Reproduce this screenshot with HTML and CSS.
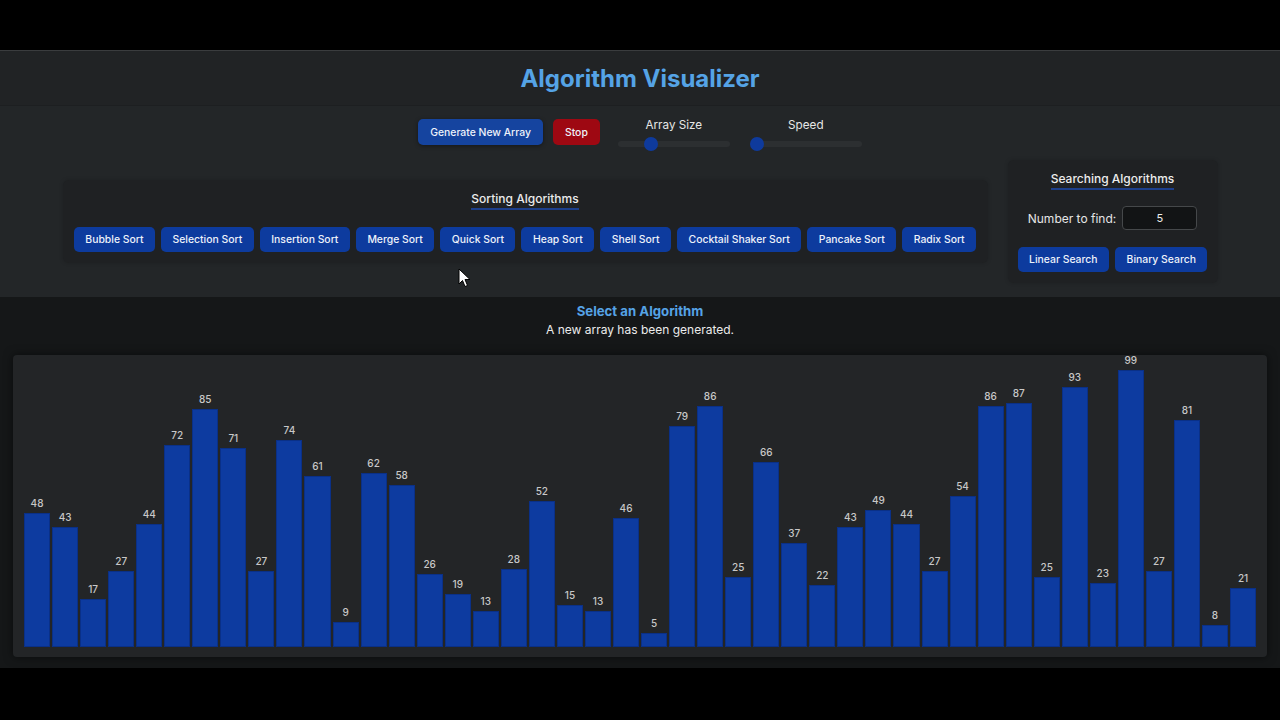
FILE: index.html
```html
<!DOCTYPE html>
<html lang="en">
<head>
<meta charset="utf-8">
<title>Algorithm Visualizer</title>
<link rel="stylesheet" href="styles.css">
</head>
<body>
<div class="frame">
  <header class="app-header">
    <h1 class="title">Algorithm Visualizer</h1>
  </header>
  <section class="controls">
    <div class="control-row">
      <button class="btn btn-generate">Generate New Array</button>
      <button class="btn btn-stop">Stop</button>
      <div class="slider-group">
        <label class="slider-label">Array Size</label>
        <input class="slider" type="range" min="5" max="150" value="44">
      </div>
      <div class="slider-group speed">
        <label class="slider-label">Speed</label>
        <input class="slider" type="range" min="1" max="100" value="1">
      </div>
    </div>
    <div class="panel-row">
      <div class="panel sort-panel">
        <h3 class="panel-title">Sorting Algorithms</h3>
        <div class="btn-row">
          <button class="btn">Bubble Sort</button>
          <button class="btn">Selection Sort</button>
          <button class="btn">Insertion Sort</button>
          <button class="btn">Merge Sort</button>
          <button class="btn">Quick Sort</button>
          <button class="btn">Heap Sort</button>
          <button class="btn">Shell Sort</button>
          <button class="btn">Cocktail Shaker Sort</button>
          <button class="btn">Pancake Sort</button>
          <button class="btn">Radix Sort</button>
        </div>
      </div>
      <div class="panel search-panel">
        <h3 class="panel-title">Searching Algorithms</h3>
        <div class="find-row">
          <span class="find-label">Number to find:</span>
          <input class="find-input" type="text" value="5">
        </div>
        <div class="btn-row">
          <button class="btn">Linear Search</button>
          <button class="btn">Binary Search</button>
        </div>
      </div>
    </div>
  </section>
  <section class="stage">
    <div class="status">
      <div class="status-title">Select an Algorithm</div>
      <div class="status-text">A new array has been generated.</div>
    </div>
    <div class="visualizer" id="viz"></div>
  </section>
</div>
<svg class="cursor" width="14" height="20" viewBox="0 0 14 20"><path d="M1 1 L1 16 L4.5 12.5 L7 18.5 L9.5 17.5 L7 11.5 L12 11.5 Z" fill="#fff" stroke="#000" stroke-width="1"/></svg>
<script>
const values=[48,43,17,27,44,72,85,71,27,74,61,9,62,58,26,19,13,28,52,15,13,46,5,79,86,25,66,37,22,43,49,44,27,54,86,87,25,93,23,99,27,81,8,21];
const viz=document.getElementById('viz');
values.forEach(v=>{
  const col=document.createElement('div');col.className='bar-col';
  const lab=document.createElement('span');lab.className='bar-label';lab.textContent=v;
  const bar=document.createElement('div');bar.className='bar';bar.style.height=(v*2.8)+'px';
  col.appendChild(lab);col.appendChild(bar);viz.appendChild(col);
});
</script>
</body>
</html>
```
FILE: styles.css
```css
* { box-sizing: border-box; }
html, body { margin: 0; padding: 0; }
body {
  background: #000;
  font-family: Inter, "Noto Sans", "Liberation Sans", sans-serif;
  color: #e8e8e8;
  width: 1280px;
  height: 720px;
  overflow: hidden;
  position: relative;
}
.frame {
  margin-top: 50px;
  border-top: 1px solid #3a3c3e;
  height: 618px;
  display: flex;
  flex-direction: column;
}
.app-header {
  height: 55px;
  background: #212325;
  border-bottom: 1px solid #1d1f21;
  display: flex;
  align-items: center;
  justify-content: center;
}
.title {
  margin: 0;
  font-size: 24px;
  font-weight: 700;
  color: #55a3e6;
  letter-spacing: 0;
}
.controls {
  height: 191px;
  background: #232628;
  padding-top: 10px;
}
.control-row {
  display: flex;
  justify-content: center;
  align-items: center;
  gap: 10px;
  height: 35px;
}
.btn {
  font-family: inherit;
  font-size: 10.4px;
  font-weight: 500;
  color: #eef2fa;
  background: #0d3b9e;
  border: none;
  border-radius: 5px;
  height: 25px;
  padding: 0 11.5px;
  white-space: nowrap;
  cursor: pointer;
}
.btn-generate {
  height: 26px;
  padding: 0 12px;
  margin-bottom: 3px;
  background: #15449f;
  box-shadow: 0 1px 4px rgba(0,0,0,0.4);
}
.btn-stop {
  height: 26px;
  padding: 0 12px;
  margin-bottom: 3px;
  background: #9e0812;
}
.slider-group {
  width: 112px;
  margin-left: 8px;
  display: flex;
  flex-direction: column;
  align-items: center;
  gap: 4px;
}
.slider-group.speed { margin-left: 10px; }
.slider-label {
  font-size: 11.7px;
  line-height: 16px;
  color: #e6e6e6;
}
.slider {
  -webkit-appearance: none;
  appearance: none;
  width: 112px;
  height: 14px;
  margin: 0;
  background: transparent;
}
.slider::-webkit-slider-runnable-track {
  height: 6px;
  background: #2c2f31;
  border-radius: 3px;
}
.slider::-webkit-slider-thumb {
  -webkit-appearance: none;
  width: 14px;
  height: 14px;
  border-radius: 50%;
  background: #0e3a9c;
  margin-top: -4px;
  border: none;
}
.panel-row {
  margin-top: 9px;
  display: flex;
  justify-content: center;
  align-items: center;
  gap: 20px;
}
.panel {
  background: #1f2123;
  border-radius: 6px;
  box-shadow: 0 0 4px rgba(0,0,0,0.18);
  display: flex;
  flex-direction: column;
  align-items: center;
}
.sort-panel {
  width: 925px;
  padding: 11px 12px 11px;
}
.sort-panel .btn-row { margin-top: 17px; }
.search-panel {
  width: 210px;
  padding: 11px 10px 11px;
}
.panel-title {
  margin: 0;
  font-size: 12px;
  font-weight: 500;
  line-height: 16px;
  color: #ececec;
  padding-bottom: 1px;
  border-bottom: 2px solid #1c3f8c;
}
.btn-row {
  display: flex;
  gap: 6px;
  margin-top: 16px;
}
.search-panel .btn-row { margin-top: 17px; }
.find-row {
  margin-top: 16px;
  display: flex;
  align-items: center;
  gap: 6px;
}
.find-label {
  font-size: 12px;
  color: #e6e6e6;
}
.find-input {
  width: 75px;
  height: 24px;
  background: #121415;
  border: 1px solid #45484a;
  border-radius: 4px;
  color: #eee;
  font-family: inherit;
  font-size: 11px;
  text-align: center;
  padding: 0;
}
.stage {
  flex: 1;
  background: #151718;
  display: flex;
  flex-direction: column;
}
.status {
  padding-top: 5px;
  text-align: center;
}
.status-title {
  font-size: 13.2px;
  line-height: 18px;
  font-weight: 700;
  color: #55a3e6;
}
.status-text {
  margin-top: 2px;
  font-size: 12px;
  line-height: 16px;
  color: #ececec;
}
.visualizer {
  margin: 17px 13px 0;
  height: 302px;
  background: #232527;
  border-radius: 4px;
  box-shadow: 0 0 10px rgba(0,0,0,0.55);
  padding: 0 11px 10px;
  display: flex;
  align-items: flex-end;
  gap: 2px;
}
.bar-col {
  flex: 1;
  display: flex;
  flex-direction: column;
  align-items: center;
  justify-content: flex-end;
}
.bar-label {
  font-size: 10px;
  line-height: 12px;
  font-weight: 500;
  color: #c8c8c8;
  margin-bottom: 4px;
}
.bar {
  width: 100%;
  background: #0d3ba0;
  box-shadow: inset 0 0 0 1px rgba(5,30,90,0.35);
}
.cursor {
  position: absolute;
  left: 458px;
  top: 268px;
}
```
